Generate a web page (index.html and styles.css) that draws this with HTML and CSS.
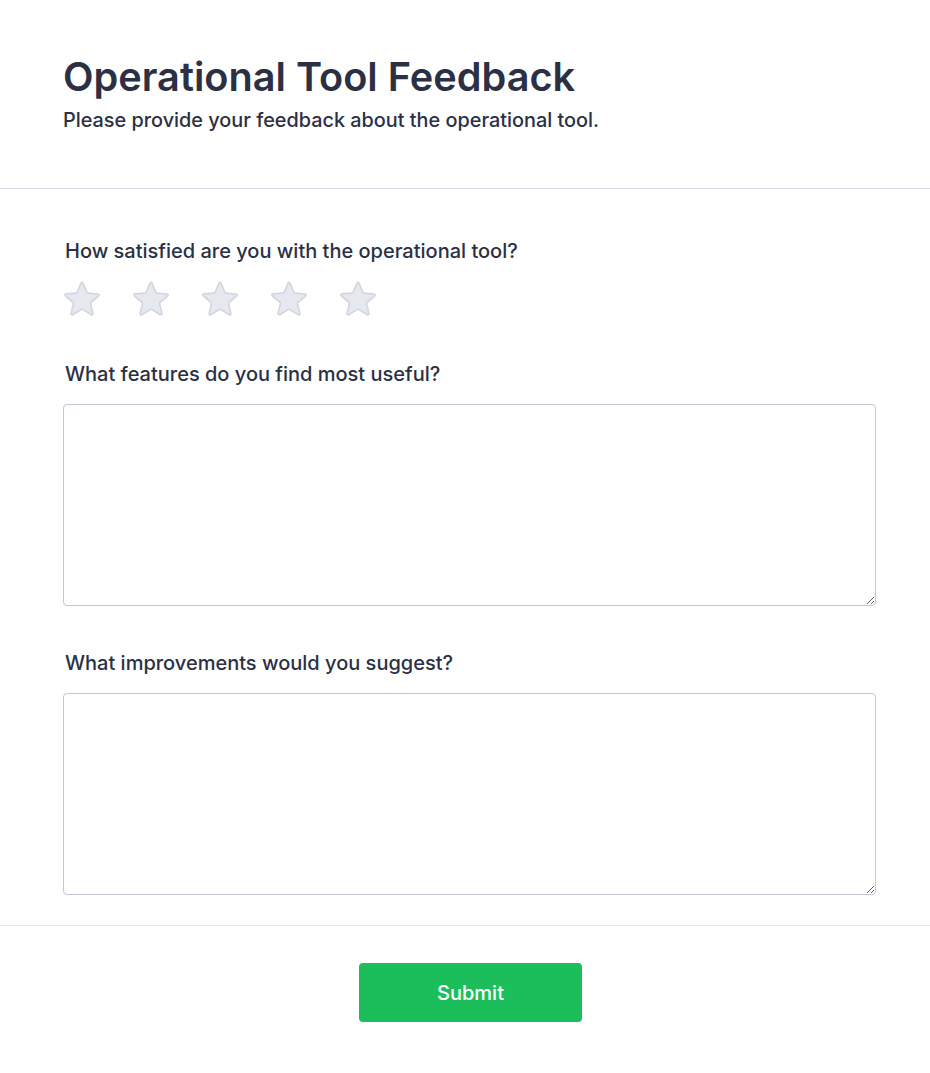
FILE: index.html
```html
<!DOCTYPE html>
<html lang="en">
<head>
    <meta charset="UTF-8">
    <meta name="viewport" content="width=device-width, initial-scale=1.0">
    <title>Operational Tool Feedback</title>
    <link rel="stylesheet" href="styles.css">
</head>
<body>

    <!-- Page Header -->
    <header class="feedback-header">
        <h1>Operational Tool Feedback</h1>
        <p>Please provide your feedback about the operational tool.</p>
    </header>

    <form class="feedback-form" id="feedback-form">
        <!-- Rating -->
        <div class="field">
            <label>How satisfied are you with the operational tool?</label>
            <div class="stars" id="stars">
                <svg class="star" viewBox="1.8 2.8 20.4 18.6" data-value="1"><path d="M11.48 3.5a.56.56 0 0 1 1.04 0l2.13 5.11a.56.56 0 0 0 .47.35l5.52.44c.5.04.7.66.32.99l-4.2 3.6a.56.56 0 0 0-.18.56l1.28 5.38a.56.56 0 0 1-.84.61l-4.72-2.88a.56.56 0 0 0-.59 0l-4.72 2.88a.56.56 0 0 1-.84-.61l1.28-5.39a.56.56 0 0 0-.18-.56l-4.2-3.6a.56.56 0 0 1 .32-.99l5.52-.44a.56.56 0 0 0 .47-.35L11.48 3.5Z"/></svg>
                <svg class="star" viewBox="1.8 2.8 20.4 18.6" data-value="2"><path d="M11.48 3.5a.56.56 0 0 1 1.04 0l2.13 5.11a.56.56 0 0 0 .47.35l5.52.44c.5.04.7.66.32.99l-4.2 3.6a.56.56 0 0 0-.18.56l1.28 5.38a.56.56 0 0 1-.84.61l-4.72-2.88a.56.56 0 0 0-.59 0l-4.72 2.88a.56.56 0 0 1-.84-.61l1.28-5.39a.56.56 0 0 0-.18-.56l-4.2-3.6a.56.56 0 0 1 .32-.99l5.52-.44a.56.56 0 0 0 .47-.35L11.48 3.5Z"/></svg>
                <svg class="star" viewBox="1.8 2.8 20.4 18.6" data-value="3"><path d="M11.48 3.5a.56.56 0 0 1 1.04 0l2.13 5.11a.56.56 0 0 0 .47.35l5.52.44c.5.04.7.66.32.99l-4.2 3.6a.56.56 0 0 0-.18.56l1.28 5.38a.56.56 0 0 1-.84.61l-4.72-2.88a.56.56 0 0 0-.59 0l-4.72 2.88a.56.56 0 0 1-.84-.61l1.28-5.39a.56.56 0 0 0-.18-.56l-4.2-3.6a.56.56 0 0 1 .32-.99l5.52-.44a.56.56 0 0 0 .47-.35L11.48 3.5Z"/></svg>
                <svg class="star" viewBox="1.8 2.8 20.4 18.6" data-value="4"><path d="M11.48 3.5a.56.56 0 0 1 1.04 0l2.13 5.11a.56.56 0 0 0 .47.35l5.52.44c.5.04.7.66.32.99l-4.2 3.6a.56.56 0 0 0-.18.56l1.28 5.38a.56.56 0 0 1-.84.61l-4.72-2.88a.56.56 0 0 0-.59 0l-4.72 2.88a.56.56 0 0 1-.84-.61l1.28-5.39a.56.56 0 0 0-.18-.56l-4.2-3.6a.56.56 0 0 1 .32-.99l5.52-.44a.56.56 0 0 0 .47-.35L11.48 3.5Z"/></svg>
                <svg class="star" viewBox="1.8 2.8 20.4 18.6" data-value="5"><path d="M11.48 3.5a.56.56 0 0 1 1.04 0l2.13 5.11a.56.56 0 0 0 .47.35l5.52.44c.5.04.7.66.32.99l-4.2 3.6a.56.56 0 0 0-.18.56l1.28 5.38a.56.56 0 0 1-.84.61l-4.72-2.88a.56.56 0 0 0-.59 0l-4.72 2.88a.56.56 0 0 1-.84-.61l1.28-5.39a.56.56 0 0 0-.18-.56l-4.2-3.6a.56.56 0 0 1 .32-.99l5.52-.44a.56.56 0 0 0 .47-.35L11.48 3.5Z"/></svg>
            </div>
        </div>

        <!-- Useful features -->
        <div class="field">
            <label for="features">What features do you find most useful?</label>
            <textarea id="features"></textarea>
        </div>

        <!-- Improvements -->
        <div class="field">
            <label for="improvements">What improvements would you suggest?</label>
            <textarea id="improvements"></textarea>
        </div>
    </form>

    <!-- Submit -->
    <footer class="feedback-footer">
        <button type="submit" form="feedback-form">Submit</button>
    </footer>

</body>
</html>
```

FILE: styles.css
```css
body {
    margin: 0;
    font-family: Inter, "Noto Sans", sans-serif;
    background-color: #fff;
    color: #2b3044;
}

.feedback-header {
    padding: 53px 54px 53px 63px;
    border-bottom: 1px solid #d8dae6;
}

.feedback-header h1 {
    margin: 0;
    font-size: 39.7px;
    font-weight: 600;
    line-height: 48px;
}

.feedback-header p {
    margin: 4px 0 0;
    font-size: 19.85px;
    font-weight: 500;
    line-height: 30px;
}

.feedback-form {
    padding: 47px 54px 30px 63px;
    border-bottom: 1px solid #e6e6f0;
    display: flex;
    flex-direction: column;
    gap: 42px;
}

.field label {
    display: block;
    padding-left: 2px;
    margin-bottom: 15px;
    font-size: 20px;
    font-weight: 500;
    line-height: 1.5;
}

.stars {
    display: flex;
    gap: 31px;
    margin-top: 5px;
}

.star {
    width: 38px;
    height: 36px;
    fill: #e6e8ef;
    stroke: #d3d6e0;
    stroke-width: 0.9;
    stroke-linejoin: round;
    cursor: pointer;
}

.field textarea {
    display: block;
    box-sizing: border-box;
    width: 100%;
    height: 202px;
    border: 1px solid #c3c6d6;
    border-radius: 4px;
    padding: 10px 12px;
    font-family: inherit;
    font-size: 18px;
}

.feedback-footer {
    padding: 37px 54px 50px 65px;
    text-align: center;
}

.feedback-footer button {
    width: 223px;
    height: 59px;
    background-color: #1bbe5b;
    color: #fff;
    border: none;
    border-radius: 4px;
    font-family: inherit;
    font-size: 20px;
    font-weight: 500;
    cursor: pointer;
}
```
